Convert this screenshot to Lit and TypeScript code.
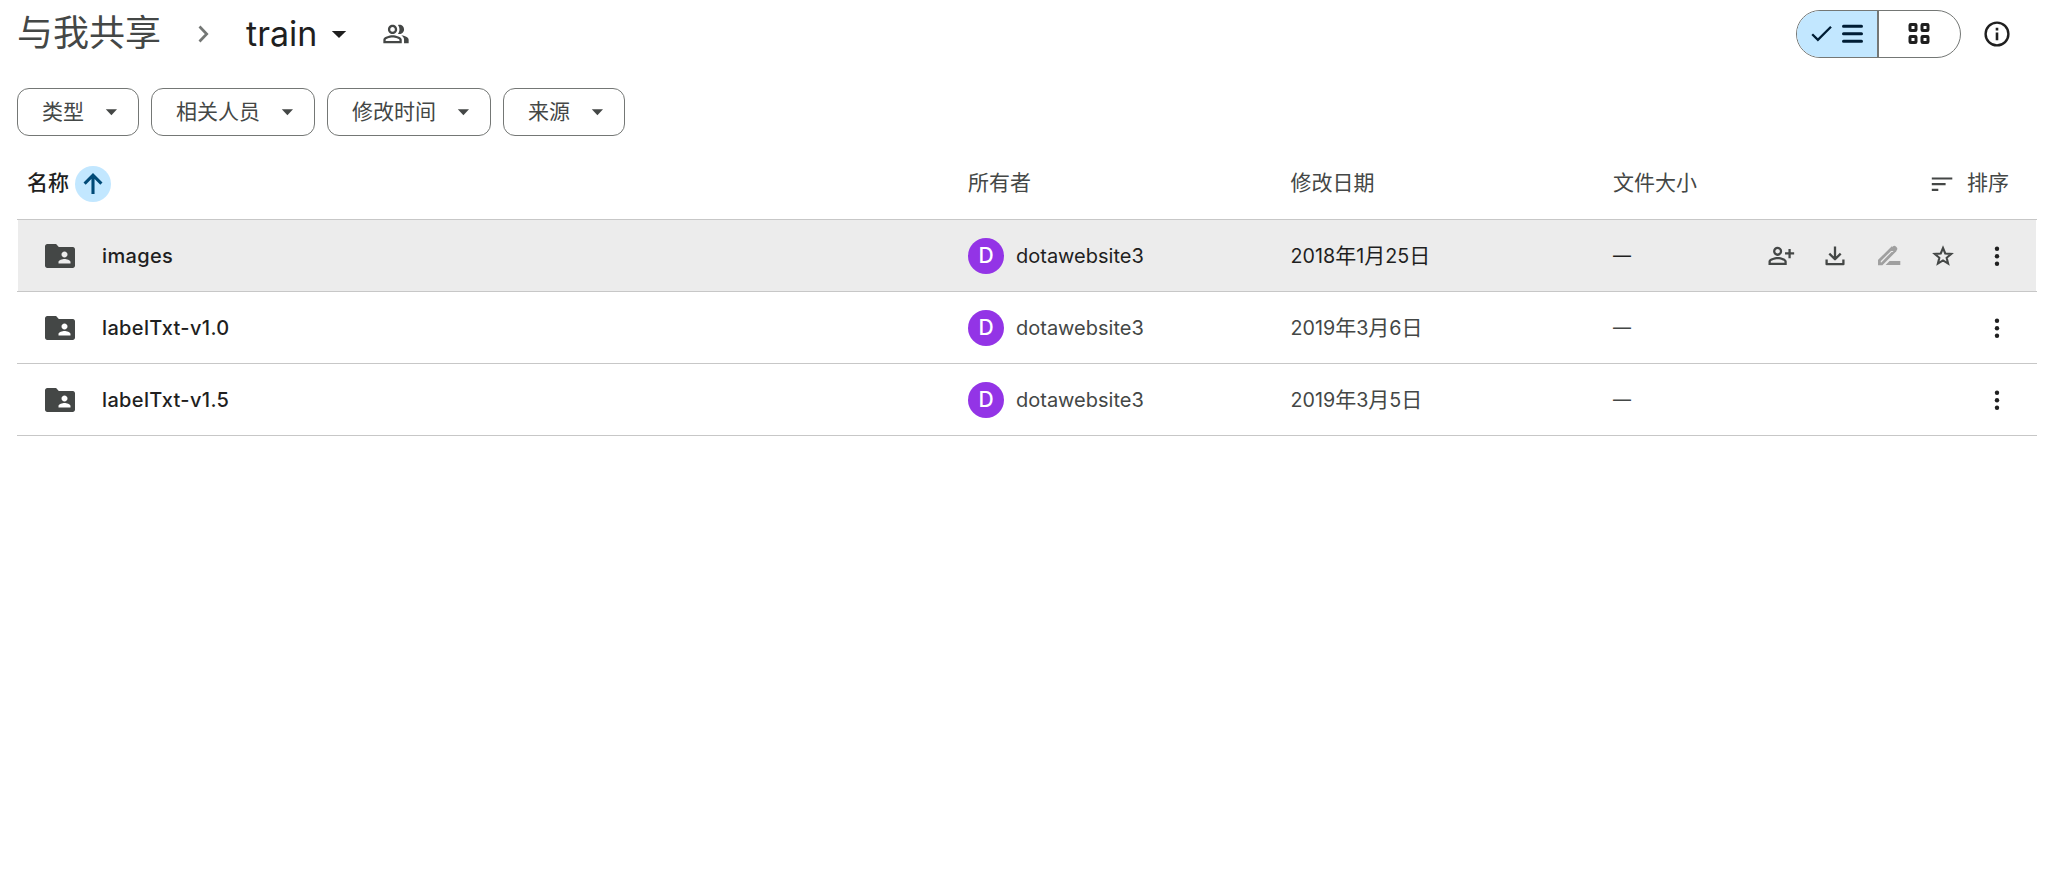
import { LitElement, html, css, svg, nothing } from "lit";
import { customElement, property } from "lit/decorators.js";
import { classMap } from "lit/directives/class-map.js";

interface FileRow {
  name: string;
  date: string;
  active: boolean;
}

const ROWS: FileRow[] = [
  { name: "images", date: "2018年1月25日", active: true },
  { name: "labelTxt-v1.0", date: "2019年3月6日", active: false },
  { name: "labelTxt-v1.5", date: "2019年3月5日", active: false },
];

const FILTERS = ["类型", "相关人员", "修改时间", "来源"];

// Each glyph is drawn in a 30-unit box centred on (15, 15), unless it carries its own scale.
const ICONS = {
  chevron: svg`<path d="M11.5 7.5l7.2 7.5-7.2 7.5" fill="none" stroke="currentColor" stroke-width="2.7"/>`,
  caret: svg`<path d="M9.8 12.2H21l-5.6 6z" fill="currentColor"/>`,
  caretLarge: svg`<path d="M7.8 12h14.4L15 19z" fill="currentColor"/>`,
  people: svg`<g transform="translate(1.2 1.2) scale(1.15)" fill="currentColor"><path d="M16.67 13.13C18.04 14.06 19 15.32 19 17v3h4v-3c0-2.18-3.57-3.47-6.33-3.87z"/><path d="M15 12c2.21 0 4-1.79 4-4s-1.79-4-4-4c-.47 0-.91.1-1.33.24C14.5 5.27 15 6.58 15 8s-.5 2.73-1.33 3.76c.42.14.86.24 1.33.24z"/><path d="M9 12c2.21 0 4-1.79 4-4s-1.79-4-4-4-4 1.79-4 4 1.79 4 4 4zm0-6c1.1 0 2 .9 2 2s-.9 2-2 2-2-.9-2-2 .9-2 2-2z"/><path d="M9 13c-2.67 0-8 1.34-8 4v3h16v-3c0-2.66-5.33-4-8-4zm6 5H3v-.99C3.2 16.29 6.3 15 9 15s5.8 1.29 6 2v1z"/></g>`,
  check: svg`<path d="M6.2 15.2l5.7 5.7L25 7.8" fill="none" stroke="currentColor" stroke-width="2.3"/>`,
  list: svg`<path d="M5.5 7.3h18M5.5 14.8h18M5.5 22.3h18" fill="none" stroke="currentColor" stroke-width="3" stroke-linecap="round"/>`,
  grid: svg`<g fill="none" stroke="currentColor" stroke-width="3"><rect x="5" y="5.5" width="6" height="6" rx=".8"/><rect x="17" y="5.5" width="6" height="6" rx=".8"/><rect x="5" y="17.5" width="6" height="6" rx=".8"/><rect x="17" y="17.5" width="6" height="6" rx=".8"/></g>`,
  info: svg`<circle cx="15" cy="15" r="11.4" fill="none" stroke="currentColor" stroke-width="2.4"/><path d="M13.7 13.6h2.6v7.7h-2.6zM13.7 8.8h2.6v2.7h-2.6z" fill="currentColor"/>`,
  arrowUp: svg`<path d="M15 25V6.5M6.6 14.6L15 6.2l8.4 8.4" fill="none" stroke="currentColor" stroke-width="3.1"/>`,
  sort: svg`<path d="M4.8 9.5h20.5M4.8 15.2h13.8M4.8 20.8h6.5" fill="none" stroke="currentColor" stroke-width="2.2"/>`,
  folder: svg`<g transform="scale(1.25)" fill="currentColor"><path fill-rule="evenodd" d="M20.6 6h-9.4L9.4 4H3.5C2.7 4 2 4.7 2 5.5v13c0 .8.7 1.5 1.5 1.5h17c.8 0 1.5-.7 1.5-1.5v-11C22 6.7 21.4 6 20.6 6zM15 9c1.1 0 2 .9 2 2s-.9 2-2 2-2-.9-2-2 .9-2 2-2zm4 8h-8v-1c0-1.33 2.67-2 4-2s4 .67 4 2v1z"/></g>`,
  personAdd: svg`<g transform="translate(1.35 1.2) scale(1.14)" fill="currentColor"><path d="M13 8c0-2.21-1.79-4-4-4S5 5.79 5 8s1.79 4 4 4 4-1.79 4-4zm-2 0c0 1.1-.9 2-2 2s-2-.9-2-2 .9-2 2-2 2 .9 2 2z"/><path d="M9 13c-2.67 0-8 1.34-8 4v3h16v-3c0-2.66-5.33-4-8-4zm6 5H3v-.99C3.2 16.29 6.3 15 9 15s5.8 1.29 6 2v1z"/><path d="M20.5 14v-3.2h3V8.9h-3V5.9h-2v3h-3v1.9h3V14z"/></g>`,
  download: svg`<path d="M15 5.5V18M9.3 12.6l5.7 5.7 5.7-5.7M6.6 18.6v4.6h16.8v-4.6" fill="none" stroke="currentColor" stroke-width="2.3" stroke-linejoin="round"/>`,
  edit: svg`<path d="M5.4 19.6L17.8 7.2l2.8 2.8L7.8 22.9H5.4z" fill="none" stroke="currentColor" stroke-width="2.8"/><path d="M17 7.4l1.8-1.8c1-1 2.1-1 3.1 0l.7.7c1 1 1 2.1 0 3.1l-1.8 1.8zM15.6 20h10.7v4H11.6z" fill="currentColor"/>`,
  star: svg`<path d="M15 7l2.25 5.5 6 .45-4.6 3.85 1.45 5.8L15 19.45 9.9 22.6l1.45-5.8-4.6-3.85 6-.45z" fill="none" stroke="currentColor" stroke-width="2.1"/>`,
  more: svg`<g fill="currentColor"><circle cx="15" cy="7.7" r="2.2"/><circle cx="15" cy="15.2" r="2.2"/><circle cx="15" cy="22.7" r="2.2"/></g>`,
};

type IconName = keyof typeof ICONS;

@customElement("drive-icon")
class DriveIcon extends LitElement {
  @property() name: IconName = "more";
  static styles = css`
    :host { display: block; flex: none; width: 30px; height: 30px; }
    svg { display: block; width: 100%; height: 100%; }
  `;
  render() {
    return html`<svg viewBox="0 0 30 30" aria-hidden="true">${ICONS[this.name]}</svg>`;
  }
}

@customElement("app-root")
class AppRoot extends LitElement {
  static styles = css`
    :host {
      display: block;
      box-sizing: border-box;
      height: 894px;
      padding: 0 24px 0 17px;
      background: #fff;
      color: #444746;
      font-family: "Inter", "Noto Sans CJK SC", sans-serif;
      font-size: 21px;
      line-height: 30px;
    }
    .top { display: flex; align-items: center; height: 68px; }
    .crumb { font-size: 36px; line-height: 48px; padding-bottom: 2px; }
    .chevron { margin-left: 27px; color: #747775; }
    .current { display: flex; align-items: center; color: #1f1f1f; margin-left: 28px; }
    .title { width: 73px; font-size: 34px; line-height: 48px; }
    .title-caret { margin-left: 5px; }
    .shared { margin-left: 27px; }
    .spacer { flex: 1; }
    .toggle { display: flex; box-sizing: border-box; width: 165px; height: 48px; border: 1px solid #747775; border-radius: 24px; overflow: hidden; }
    .half { flex: 1; display: flex; align-items: center; justify-content: center; color: #1f1f1f; }
    .half.on { flex: none; width: 82px; box-sizing: border-box; border-right: 2px solid #747775; background: #c2e7ff; color: #001d35; gap: 2px; }
    .info { margin: 0 25px 0 21px; color: #1f1f1f; }
    .filters { display: flex; gap: 12px; padding-top: 20px; }
    .chip { display: flex; align-items: center; gap: 12px; box-sizing: border-box; height: 48px; padding: 0 12px 0 24px; border: 1px solid #747775; border-radius: 12px; }
    .cols { display: grid; grid-template-columns: 951px 322.5px 322.5px auto 1fr; align-items: center; }
    .head { height: 70px; margin-top: 13px; width: 2020px; }
    .label { padding-bottom: 2px; }
    .sorted { display: flex; align-items: center; padding-left: 10px; gap: 6px; color: #1f1f1f; font-weight: 500; }
    .badge { display: grid; place-items: center; width: 36px; height: 36px; border-radius: 50%; background: #c2e7ff; color: #004a77; }
    .sort { display: flex; align-items: center; justify-content: flex-end; gap: 10.5px; padding-right: 28px; }
    .list { border-top: 1px solid #c7c7c7; width: 2020px; }
    .line { border-bottom: 1px solid #c7c7c7; padding: 0 1px; }
    .row { height: 71px; grid-template-columns: 950px 322.5px 322.5px auto 1fr; }
    .row.active { background: #ececec; color: #1f1f1f; }
    .file { display: flex; align-items: center; gap: 24px; padding-left: 24px; color: #1f1f1f; font-weight: 500; }
    .folder { width: 36px; height: 36px; color: #444746; }
    .name { font-size: 20px; letter-spacing: 0.35px; }
    .owner { display: flex; align-items: center; gap: 12px; }
    .avatar { display: grid; place-items: center; width: 36px; height: 36px; border-radius: 50%; background: #9334e6; color: #fff; font-weight: 500; }
    .who { font-size: 20px; }
    .date { white-space: nowrap; }
    .num { font-size: 19.7px; }
    .dash { font-size: 18px; }
    .actions { display: flex; justify-content: flex-end; align-items: center; gap: 24px; padding-right: 24px; color: #444746; }
    .disabled { color: #a0a0a0; }
    .dots { color: #1f1f1f; }
  `;

  private date(text: string) {
    return text.split(/(\d+)/).map((part) => (/^\d/.test(part) ? html`<span class="num">${part}</span>` : part));
  }

  private row(r: FileRow) {
    return html`<div class="line">
      <div class=${classMap({ cols: true, row: true, active: r.active })}>
        <div class="file"><drive-icon class="folder" name="folder"></drive-icon><span class="name">${r.name}</span></div>
        <div class="owner"><span class="avatar">D</span><span class="who">dotawebsite3</span></div>
        <div class="date">${this.date(r.date)}</div>
        <span class="dash">—</span>
        <div class="actions">
          ${r.active
            ? html`<drive-icon name="personAdd"></drive-icon>
                <drive-icon name="download"></drive-icon>
                <drive-icon class="disabled" name="edit"></drive-icon>
                <drive-icon name="star"></drive-icon>`
            : nothing}
          <drive-icon class="dots" name="more"></drive-icon>
        </div>
      </div>
    </div>`;
  }

  render() {
    return html`
      <header class="top">
        <span class="crumb">与我共享</span>
        <drive-icon class="chevron" name="chevron"></drive-icon>
        <div class="current">
          <span class="title">train</span>
          <drive-icon class="title-caret" name="caretLarge"></drive-icon>
        </div>
        <drive-icon class="shared" name="people"></drive-icon>
        <span class="spacer"></span>
        <div class="toggle">
          <div class="half on">
            <drive-icon name="check"></drive-icon>
            <drive-icon name="list"></drive-icon>
          </div>
          <div class="half"><drive-icon name="grid"></drive-icon></div>
        </div>
        <drive-icon class="info" name="info"></drive-icon>
      </header>
      <nav class="filters">
        ${FILTERS.map((f) => html`<div class="chip"><span>${f}</span><drive-icon name="caret"></drive-icon></div>`)}
      </nav>
      <div class="cols head">
        <div class="sorted"><span class="label">名称</span><span class="badge"><drive-icon name="arrowUp"></drive-icon></span></div>
        <span class="label">所有者</span>
        <span class="label">修改日期</span>
        <span class="label">文件大小</span>
        <div class="sort"><drive-icon name="sort"></drive-icon><span class="label">排序</span></div>
      </div>
      <div class="list">${ROWS.map((r) => this.row(r))}</div>
    `;
  }
}
